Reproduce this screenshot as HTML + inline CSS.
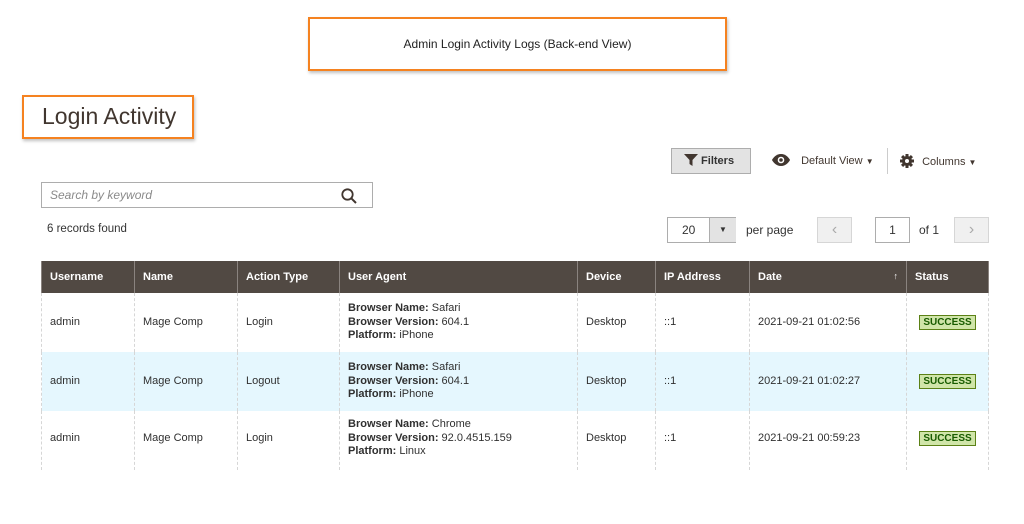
<!DOCTYPE html>
<html><head><meta charset="utf-8"><style>
*{box-sizing:border-box;margin:0;padding:0}
body{width:1024px;height:524px;background:#fff;font-family:"Liberation Sans",sans-serif;color:#333;position:relative;overflow:hidden}
.a{position:absolute}
.ob{border:2px solid #f58220;box-shadow:1px 2px 3px rgba(0,0,0,.25)}
table{border-collapse:collapse;position:absolute;left:41px;top:261px;width:947px;font-size:11px;table-layout:fixed}
th{background:#514943;color:#fff;text-align:left;font-weight:bold;padding:0 8px;height:32px;border-left:1px solid #8a837f;border-right:1px solid #8a837f}
td{padding:0 8px;border-left:1px dashed #d6d6d6;border-right:1px dashed #d6d6d6;color:#303030;line-height:13.5px}
tr.r td{height:59px}
tr.h td{background:#e5f7fe}
.s{display:inline-block;background:#d0e5a9;border:1px solid #5b8116;color:#185b00;font-weight:bold;font-size:10px;padding:1px 3px;line-height:11px}
</style></head><body>
<div class="a ob" style="left:308px;top:17px;width:419px;height:54px;font-size:12px;color:#222;text-align:center;line-height:50px">Admin Login Activity Logs (Back-end View)</div>
<div class="a ob" style="left:22px;top:95px;width:172px;height:44px;font-size:23px;color:#41362f;padding-left:18px;line-height:38px">Login Activity</div>

<div class="a" style="left:671px;top:148px;width:80px;height:26px;background:#e3e3e3;border:1px solid #adadad;font-size:11px;font-weight:bold;color:#333;line-height:24px;padding-left:12px">
<svg width="14" height="12" viewBox="0 0 14 12" style="vertical-align:-2px"><path d="M0 0h14L8.5 6v6L5.5 10V6z" fill="#41362f"/></svg> Filters</div>
<div class="a" style="left:772px;top:154px;font-size:11px;color:#41362f">
<svg width="18" height="12" viewBox="0 0 18 12" style="vertical-align:-2px"><path d="M9 0C4 0 1 4 0 6c1 2 4 6 9 6s8-4 9-6c-1-2-4-6-9-6z" fill="#41362f"/><circle cx="9" cy="6" r="3.3" fill="#fff"/><circle cx="9" cy="6" r="1.8" fill="#41362f"/></svg>
<span style="margin-left:8px">Default View</span> <span style="font-size:8px">▼</span></div>
<div class="a" style="left:887px;top:148px;width:1px;height:26px;background:#ccc"></div>
<div class="a" style="left:900px;top:154px;font-size:11px;color:#41362f">
<svg width="14" height="14" viewBox="0 0 14 14" style="vertical-align:-3px"><g fill="#41362f"><circle cx="7" cy="7" r="5"/><rect x="5.5" y="0" width="3" height="14"/><rect x="0" y="5.5" width="14" height="3"/><rect x="5.5" y="0" width="3" height="14" transform="rotate(45 7 7)"/><rect x="5.5" y="0" width="3" height="14" transform="rotate(-45 7 7)"/></g><circle cx="7" cy="7" r="2" fill="#fff"/></svg>
<span style="margin-left:5px">Columns</span> <span style="font-size:8px">▼</span></div>

<div class="a" style="left:41px;top:182px;width:332px;height:26px;border:1px solid #adadad;font-size:12px;font-style:italic;color:#8a8a8a;line-height:24px;padding-left:8px">Search by keyword
<svg class="a" style="right:15px;top:5px" width="16" height="16" viewBox="0 0 16 16"><circle cx="6.5" cy="6.5" r="5.2" fill="none" stroke="#41362f" stroke-width="1.8"/><path d="M10.3 10.3L15 15" stroke="#41362f" stroke-width="2"/></svg></div>
<div class="a" style="left:47px;top:223px;font-size:11.5px;color:#333">6 records found</div>

<div class="a" style="left:667px;top:217px;width:69px;height:26px;border:1px solid #adadad;font-size:12px;line-height:24px;padding-left:14px">20
<div class="a" style="left:41px;top:0;width:27px;height:24px;background:#e3e3e3;border-left:1px solid #adadad;text-align:center;font-size:8px;color:#333">▼</div></div>
<div class="a" style="left:746px;top:223px;font-size:12px">per page</div>
<div class="a" style="left:817px;top:217px;width:35px;height:26px;background:#f0f0f0;border:1px solid #d6d6d6;color:#aaa;text-align:center;line-height:23px;font-size:16px">‹</div>
<div class="a" style="left:875px;top:217px;width:35px;height:26px;border:1px solid #adadad;text-align:center;line-height:24px;font-size:12px">1</div>
<div class="a" style="left:919px;top:223px;font-size:12px">of 1</div>
<div class="a" style="left:954px;top:217px;width:35px;height:26px;background:#f0f0f0;border:1px solid #d6d6d6;color:#aaa;text-align:center;line-height:23px;font-size:16px">›</div>

<table>
<colgroup><col style="width:93px"><col style="width:103px"><col style="width:102px"><col style="width:238px"><col style="width:78px"><col style="width:94px"><col style="width:157px"><col style="width:82px"></colgroup>
<tr><th>Username</th><th>Name</th><th>Action Type</th><th>User Agent</th><th>Device</th><th>IP Address</th><th>Date <span style="float:right;font-size:9px">↑</span></th><th>Status</th></tr>
<tr class="r"><td>admin</td><td>Mage Comp</td><td>Login</td><td><b>Browser Name:</b> Safari<br><b>Browser Version:</b> 604.1<br><b>Platform:</b> iPhone</td><td>Desktop</td><td>::1</td><td>2021-09-21 01:02:56</td><td style="text-align:center"><span class="s">SUCCESS</span></td></tr>
<tr class="r h"><td>admin</td><td>Mage Comp</td><td>Logout</td><td><b>Browser Name:</b> Safari<br><b>Browser Version:</b> 604.1<br><b>Platform:</b> iPhone</td><td>Desktop</td><td>::1</td><td>2021-09-21 01:02:27</td><td style="text-align:center"><span class="s">SUCCESS</span></td></tr>
<tr class="r"><td style="height:55px;padding-bottom:4px">admin</td><td style="padding-bottom:4px">Mage Comp</td><td style="padding-bottom:4px">Login</td><td style="padding-bottom:4px"><b>Browser Name:</b> Chrome<br><b>Browser Version:</b> 92.0.4515.159<br><b>Platform:</b> Linux</td><td style="padding-bottom:4px">Desktop</td><td style="padding-bottom:4px">::1</td><td style="padding-bottom:4px">2021-09-21 00:59:23</td><td style="text-align:center;padding-bottom:4px"><span class="s">SUCCESS</span></td></tr>
</table>
</body></html>
